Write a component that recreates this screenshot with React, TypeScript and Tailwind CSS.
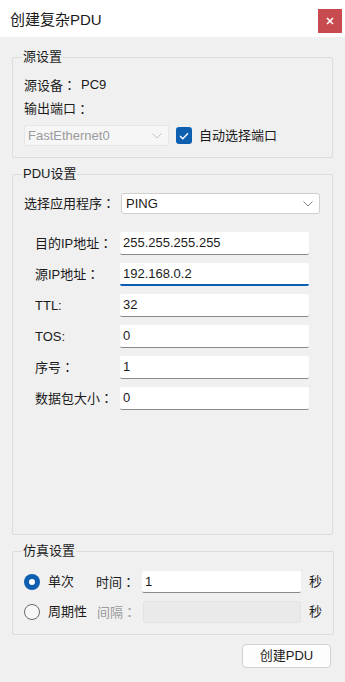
import React from "react";

const font = { fontFamily: '"Liberation Sans", "Noto Sans CJK SC", sans-serif' };

function T({ s }: { s: string }) {
  const parts = s.split("：");
  return (
    <>
      {parts.map((p, i) => (
        <React.Fragment key={i}>
          {p}
          {i < parts.length - 1 && <span className="font-['Noto_Sans_CJK_JP',sans-serif]">：</span>}
        </React.Fragment>
      ))}
    </>
  );
}

function Chevron({ color = "#888" }: { color?: string }) {
  return (
    <svg width="10" height="6" viewBox="0 0 10 6" fill="none">
      <path d="M0.5 0.5 L5 5 L9.5 0.5" stroke={color} strokeWidth="1" />
    </svg>
  );
}

function Group({ title, className, children }: { title: string; className?: string; children: React.ReactNode }) {
  return (
    <fieldset className={"border border-[#dcdcdc] rounded-[2px] pl-[11px] pr-[11px] " + (className || "")}>
      <legend className="ml-[-2px] px-[1px] text-[13px] leading-[18px] text-[#1b1b1b]">{title}</legend>
      {children}
    </fieldset>
  );
}

function Field({ label, value, focused }: { label: string; value: string; focused?: boolean }) {
  return (
    <div className="flex items-center h-[23px]">
      <div className="w-[85px] text-[13px] text-[#1b1b1b]">
        <T s={label} />
      </div>
      <div
        className={
          "w-[189px] h-[23px] bg-white rounded-[2px] flex items-center pl-[3px] text-[13px] text-[#1b1b1b] " +
          (focused ? "border-b-2 border-[#0a5fb4]" : "border-b border-[#8a8a8a]")
        }
      >
        {value}
      </div>
    </div>
  );
}

export default function App() {
  return (
    <div style={font} className="w-[345px] h-[682px] bg-[#f0f0f0] flex flex-col text-[#1b1b1b]">
      <div className="h-[37px] bg-white flex items-start justify-between pl-[10px] pr-[3px] shrink-0">
        <div className="text-[15px] leading-[20px] mt-[10px] text-[#1a1a1a]">创建复杂PDU</div>
        <div className="w-[24px] h-[24px] mt-[9px] bg-[#c84b4f] flex items-center justify-center">
          <svg width="8" height="8" viewBox="0 0 8 8">
            <path d="M1 1 L7 7 M7 1 L1 7" stroke="white" strokeWidth="1.6" />
          </svg>
        </div>
      </div>

      <div className="px-[12px] flex flex-col">
        <Group title="源设置" className="mt-[11px] h-[110px]">
          <div className="mt-[10px] h-[18px] flex items-center text-[13px]">
            <span>
              <T s="源设备：" />
            </span>
            <span className="ml-[5px]">PC9</span>
          </div>
          <div className="mt-[6px] h-[18px] flex items-center text-[13px]">
            <T s="输出端口：" />
          </div>
          <div className="mt-[7px] flex items-center">
            <div className="w-[145px] h-[21px] bg-[#f6f6f6] border border-[#e6e6e6] rounded-[2px] flex items-center justify-between pl-[3px] pr-[6px] text-[13px] text-[#9a9a9a]">
              <span>FastEthernet0</span>
              <Chevron color="#c4c4c4" />
            </div>
            <div className="ml-[7px] w-[16px] h-[17px] rounded-[3px] bg-[#0f5fb0] flex items-center justify-center">
              <svg width="10" height="8" viewBox="0 0 10 8" fill="none">
                <path d="M1 4 L3.8 6.8 L9 1.2" stroke="white" strokeWidth="1.3" />
              </svg>
            </div>
            <span className="ml-[7px] text-[13px]">自动选择端口</span>
          </div>
        </Group>

        <Group title="PDU设置" className="mt-[7px] h-[370px]">
          <div className="mt-[10px] flex items-center">
            <span className="w-[97px] text-[13px]">
              <T s="选择应用程序：" />
            </span>
            <div className="w-[199px] h-[21px] bg-white border border-[#d0d0d0] rounded-[3px] flex items-center justify-between pl-[4px] pr-[6px] text-[13px]">
              <span>PING</span>
              <Chevron color="#808080" />
            </div>
          </div>
          <div className="mt-[18px] pl-[11px] flex flex-col gap-[8px]">
            <Field label="目的IP地址：" value="255.255.255.255" />
            <Field label="源IP地址：" value="192.168.0.2" focused />
            <Field label="TTL:" value="32" />
            <Field label="TOS:" value="0" />
            <Field label="序号：" value="1" />
            <Field label="数据包大小：" value="0" />
          </div>
        </Group>

        <Group title="仿真设置" className="mt-[7px] h-[93px]">
          <div className="mt-[11px] flex flex-col gap-[8px]">
            <div className="flex items-center h-[22px] text-[13px]">
              <div className="w-[16px] h-[16px] rounded-full bg-[#0f5fb0] flex items-center justify-center">
                <div className="w-[6px] h-[6px] rounded-full bg-white" />
              </div>
              <span className="ml-[8px] w-[48px]">单次</span>
              <span className="w-[46px]">
                <T s="时间：" />
              </span>
              <div className="w-[159px] h-[22px] bg-white border-b border-[#8a8a8a] rounded-[2px] flex items-center pl-[3px]">1</div>
              <span className="ml-[8px]">秒</span>
            </div>
            <div className="flex items-center h-[22px] text-[13px]">
              <div className="w-[16px] h-[16px] rounded-full border border-[#6a6a6a] bg-[#f7f7f7]" />
              <span className="ml-[8px] w-[49px]">周期性</span>
              <span className="w-[46px] text-[#9a9a9a]">
                <T s="间隔：" />
              </span>
              <div className="w-[158px] h-[22px] bg-[#eaeaea] border border-[#e2e2e2] rounded-[2px]" />
              <span className="ml-[8px]">秒</span>
            </div>
          </div>
        </Group>

        <div className="mt-[9px] flex justify-end pr-[2px]">
          <div className="w-[89px] h-[24px] bg-[#fdfdfd] border border-[#d2d2d2] rounded-[4px] flex items-center justify-center text-[13px]">
            创建PDU
          </div>
        </div>
      </div>
    </div>
  );
}
